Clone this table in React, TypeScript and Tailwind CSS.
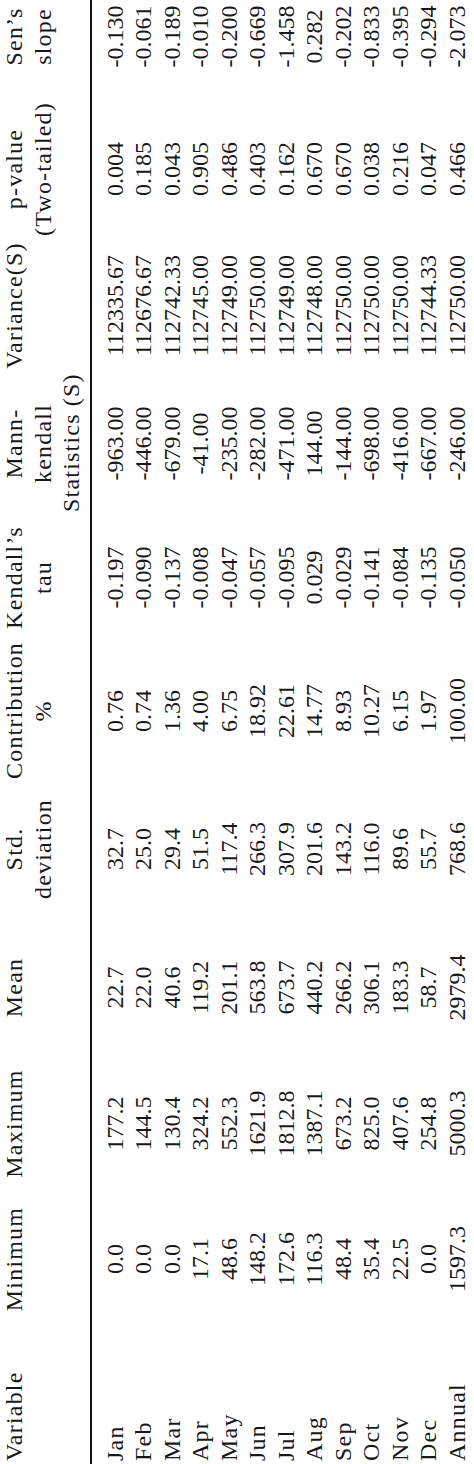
type Row = [string, ...string[]];

const headers: string[][] = [
  ['Variable'],
  ['Minimum'],
  ['Maximum'],
  ['Mean'],
  ['Std.', 'deviation'],
  ['Contribution', '%'],
  ['Kendall’s', 'tau'],
  ['Mann-', 'kendall', 'Statistics (S)'],
  ['Variance(S)'],
  ['p-value', '(Two-tailed)'],
  ['Sen’s', 'slope'],
];

const rows: Row[] = [
  ['Jan', '0.0', '177.2', '22.7', '32.7', '0.76', '-0.197', '-963.00', '112335.67', '0.004', '-0.130'],
  ['Feb', '0.0', '144.5', '22.0', '25.0', '0.74', '-0.090', '-446.00', '112676.67', '0.185', '-0.061'],
  ['Mar', '0.0', '130.4', '40.6', '29.4', '1.36', '-0.137', '-679.00', '112742.33', '0.043', '-0.189'],
  ['Apr', '17.1', '324.2', '119.2', '51.5', '4.00', '-0.008', '-41.00', '112745.00', '0.905', '-0.010'],
  ['May', '48.6', '552.3', '201.1', '117.4', '6.75', '-0.047', '-235.00', '112749.00', '0.486', '-0.200'],
  ['Jun', '148.2', '1621.9', '563.8', '266.3', '18.92', '-0.057', '-282.00', '112750.00', '0.403', '-0.669'],
  ['Jul', '172.6', '1812.8', '673.7', '307.9', '22.61', '-0.095', '-471.00', '112749.00', '0.162', '-1.458'],
  ['Aug', '116.3', '1387.1', '440.2', '201.6', '14.77', '0.029', '144.00', '112748.00', '0.670', '0.282'],
  ['Sep', '48.4', '673.2', '266.2', '143.2', '8.93', '-0.029', '-144.00', '112750.00', '0.670', '-0.202'],
  ['Oct', '35.4', '825.0', '306.1', '116.0', '10.27', '-0.141', '-698.00', '112750.00', '0.038', '-0.833'],
  ['Nov', '22.5', '407.6', '183.3', '89.6', '6.15', '-0.084', '-416.00', '112750.00', '0.216', '-0.395'],
  ['Dec', '0.0', '254.8', '58.7', '55.7', '1.97', '-0.135', '-667.00', '112744.33', '0.047', '-0.294'],
  ['Annual', '1597.3', '5000.3', '2979.4', '768.6', '100.00', '-0.050', '-246.00', '112750.00', '0.466', '-2.073'],
];

// column widths tuned so the centres land where the scan has them
const grid = 'grid grid-cols-[137px_136px_135px_137px_140px_136px_131px_137px_139px_134px_131px]';

function Cell({ i, children, label }: { i: number; children: React.ReactNode; label?: boolean }) {
  // words get a little tracking, the scan's face is wider than Times for letters (digits match)
  const track = label ? 'tracking-[0.05em]' : '';
  return (
    <div className={`${i === 0 ? 'pl-[3px] text-left' : 'text-center'} whitespace-nowrap ${track}`}>{children}</div>
  );
}

export default function App() {
  return (
    <div className="relative w-[474px] h-[1464px] overflow-hidden bg-white">
      {/* the page is printed landscape, so the whole table is turned a quarter left */}
      <div className="absolute left-0 top-[1464px] w-[1493px] h-[474px] origin-top-left -rotate-90 text-[#181818] text-[24px] leading-[28.5px] [font-family:'Liberation_Serif',serif]">
        <div className={`${grid} h-[85.5px]`}>
          {headers.map((lines, i) => (
            <Cell key={i} i={i} label>
              {lines.map((l) => (
                <div key={l}>{l}</div>
              ))}
            </Cell>
          ))}
        </div>
        <div className="mt-[4px] h-[2px] bg-[#111]" />
        <div className="mt-[9px] flex flex-col">
          {rows.map((r) => (
            <div key={r[0]} className={grid}>
              {r.map((v, i) => (
                <Cell key={i} i={i} label={i === 0}>
                  {v}
                </Cell>
              ))}
            </div>
          ))}
        </div>
      </div>
    </div>
  );
}
